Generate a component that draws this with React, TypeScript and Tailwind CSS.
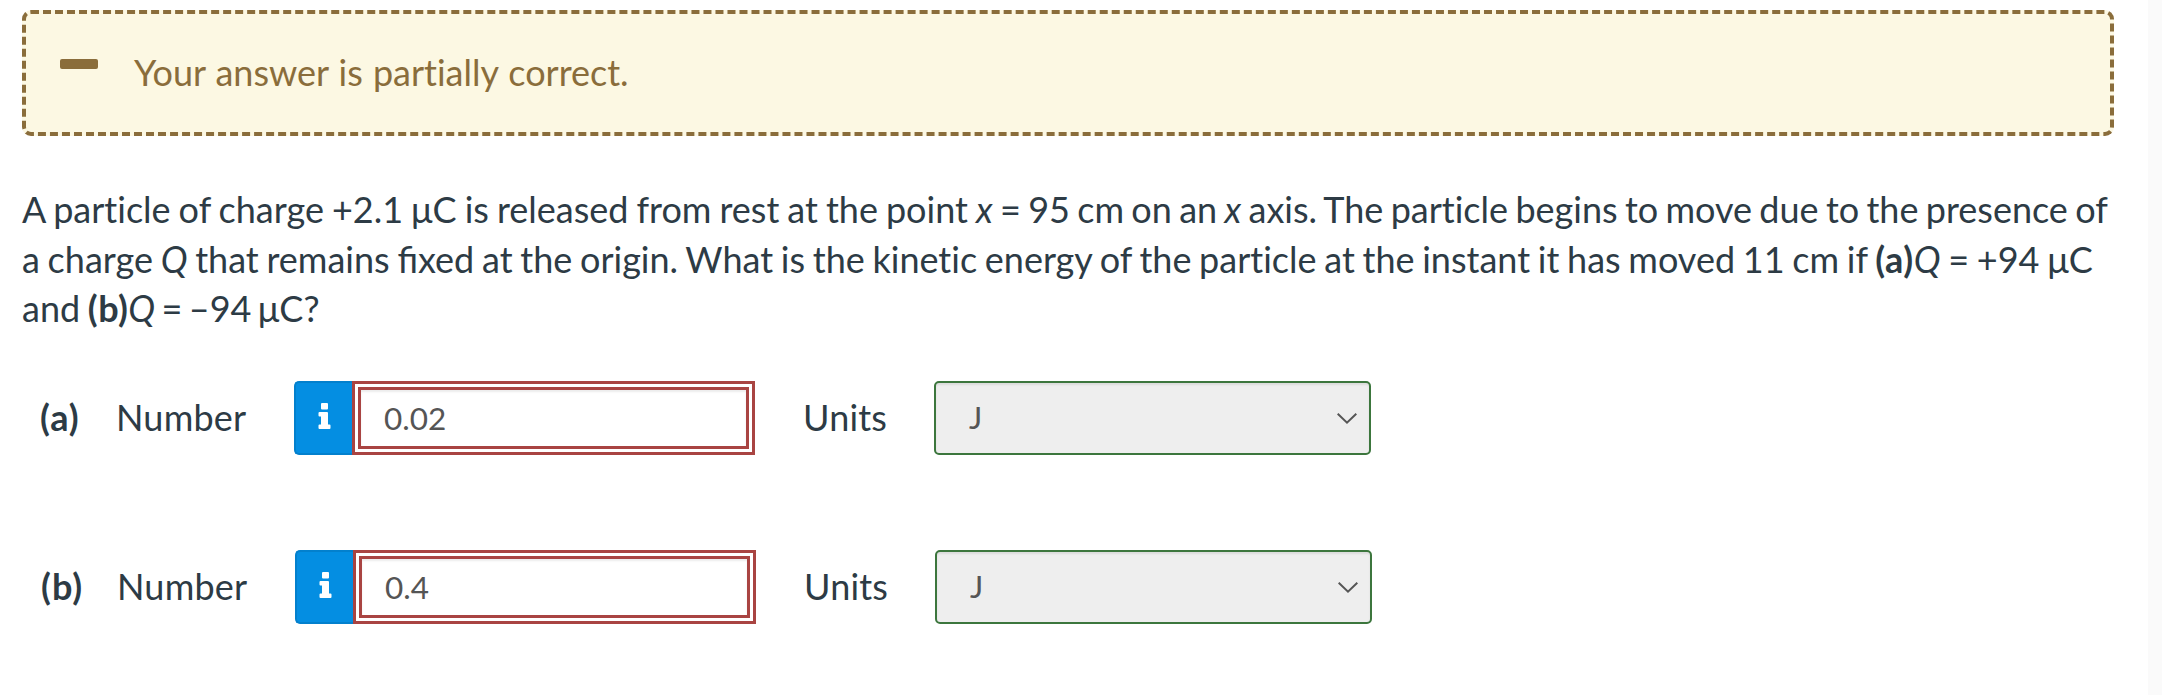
import { useState } from "react";

const parts = [
  { id: "a", answer: "0.02", unit: "J", rowClass: "mt-[47px] pl-[40px]" },
  { id: "b", answer: "0.4", unit: "J", rowClass: "mt-[95px] pl-[41px]" },
];

const unitOptions = ["J", "N", "C", "m"];

function PartialAlert() {
  return (
    <div className="flex h-[126px] w-[2092px] items-start rounded-[9px] border-4 border-dashed border-[#8a6d3b] bg-[#fcf8e3] pl-[34px] text-[#8a6d3b]">
      <span className="mt-[45px] h-[10px] w-[38px] rounded-[2px] bg-[#8a6d3b]" />
      <p className="mt-[33px] ml-[36px] leading-[50px] [word-spacing:0.9px]">Your answer is partially correct.</p>
    </div>
  );
}

function InfoIcon() {
  return (
    <svg width="14" height="26" viewBox="0 0 14 26" fill="#fff" aria-hidden="true">
      <rect x="3" y="0" width="7" height="6.5" rx="1" />
      <path d="M1.5 9h7.5a1 1 0 0 1 1 1v11.500h1.500a1 1 0 0 1 1 1v2.500a1 1 0 0 1-1 1H1.500a1 1 0 0 1-1-1v-2.500a1 1 0 0 1 1-1H3V13.500H1.500a1 1 0 0 1-1-1V10a1 1 0 0 1 1-1z" />
    </svg>
  );
}

function AnswerRow({ part }: { part: (typeof parts)[number] }) {
  const [answer, setAnswer] = useState(part.answer);
  const [unit, setUnit] = useState(part.unit);

  return (
    <div className={`flex h-[74px] items-center ${part.rowClass}`}>
      <span className="w-[76px] pb-0.5 font-bold tracking-[1px]">({part.id})</span>
      <label htmlFor={`number-${part.id}`} className="w-[178px] pb-0.5 tracking-[0.2px]">
        Number
      </label>
      <button
        type="button"
        aria-label="Information"
        className="flex h-[74px] w-[58px] items-center justify-center rounded-l-[5px] border-2 border-r-0 border-[#0380cd] bg-[#048ee2] pb-1 pl-0.5"
      >
        <InfoIcon />
      </button>
      <input
        id={`number-${part.id}`}
        value={answer}
        onChange={(event) => setAnswer(event.target.value)}
        className="h-[74px] w-[403px] border-[9px] border-double border-[#a94442] bg-white px-[23px] text-[31.5px] text-[#555] shadow-[inset_0_2px_2px_rgba(0,0,0,0.075)] outline-none"
      />
      <label htmlFor={`units-${part.id}`} className="ml-[48px] w-[131px] pb-0.5 tracking-[0.2px]">
        Units
      </label>
      <div className="relative">
        <select
          id={`units-${part.id}`}
          value={unit}
          onChange={(event) => setUnit(event.target.value)}
          className="block h-[74px] w-[437px] appearance-none rounded-[5px] border-2 border-[#3c763d] bg-[#eee] px-[33px] text-[31.5px] text-[#555] shadow-[inset_0_2px_2px_rgba(0,0,0,0.075)] outline-none"
        >
          {unitOptions.map((option) => (
            <option key={option}>{option}</option>
          ))}
        </select>
        <svg
          className="pointer-events-none absolute top-[31px] right-[14px]"
          width="20"
          height="13"
          viewBox="0 0 20 13"
          fill="none"
          stroke="#555"
          strokeWidth="2"
          aria-hidden="true"
        >
          <path d="M0.700 1.700 10 10.700l9.300-9" />
        </svg>
      </div>
    </div>
  );
}

export default function App() {
  return (
    <div className="flex h-[695px] w-[2162px] overflow-hidden bg-white font-['Lato',sans-serif] text-[36px] text-[#2d3b45] [font-variant-ligatures:none]">
      <main className="w-[2148px] pt-[10px]">
        <div className="pl-[22px]">
          <PartialAlert />
          <p className="mt-[49px] leading-[49.5px] whitespace-nowrap [word-spacing:-1.5px]">
            <span className="[word-spacing:-1.2px]">
              A particle of charge +2.1 μC is released from rest at the point <i>x</i>
            </span>
            <span className="[word-spacing:-1.9px]">
              {" "}
              = 95 cm on an <i>x</i> axis. The particle begins to move due to the presence of
            </span>
            <br />a charge <i>Q</i> that remains <span className="[font-variant-ligatures:normal]">fixed</span> at the
            origin. What is the kinetic energy of the particle at the instant it has moved 11 cm if{" "}
            <b className="tracking-[0.6px]">(a)</b>
            <i>Q</i> = +94 μC
            <br />
            and <b className="tracking-[0.4px]">(b)</b>
            <i>Q</i>
            <span className="[word-spacing:-2.8px]"> = –94 μC?</span>
          </p>
        </div>
        {parts.map((part) => (
          <AnswerRow key={part.id} part={part} />
        ))}
      </main>
      <aside className="w-[14px] bg-[#fafafa]" />
    </div>
  );
}
